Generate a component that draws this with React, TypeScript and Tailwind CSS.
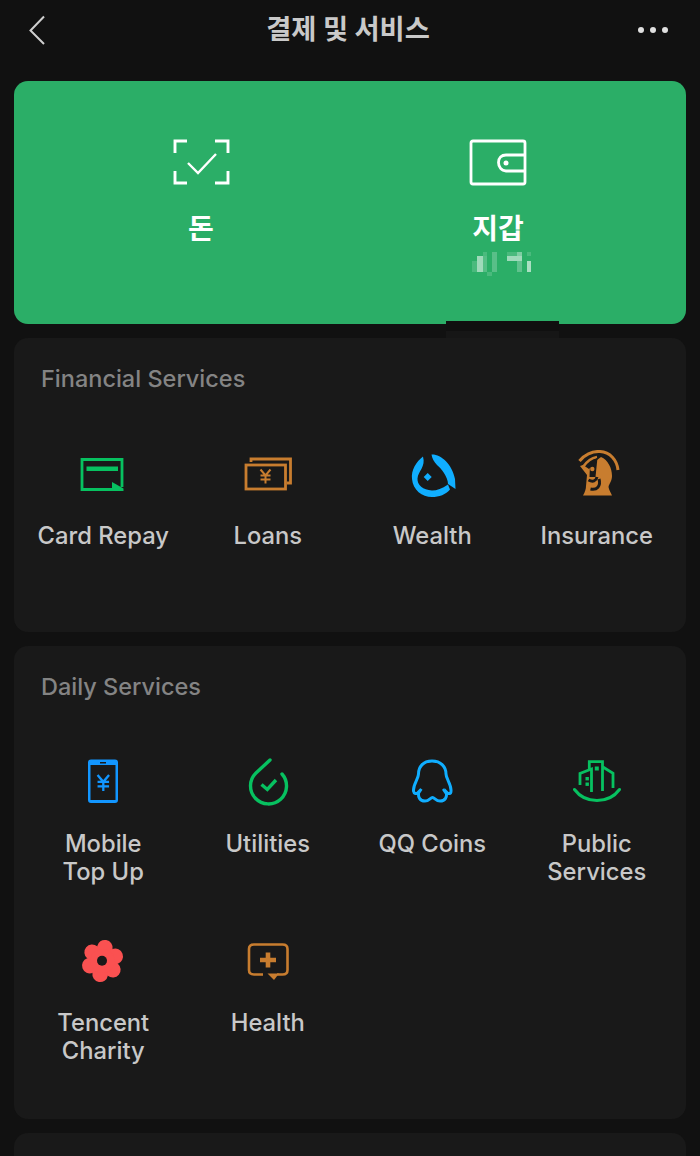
const Y = ({ x, y, s = 1, c }: { x: number; y: number; s?: number; c: string }) => (
  <path
    transform={`translate(${x} ${y}) scale(${s})`}
    d="M-5 -7 L0 -1 L5 -7 M-5 -1 H5 M-5 3 H5 M0 -1 V7"
    fill="none"
    stroke={c}
    strokeWidth={2}
  />
);

const Box = ({ children }: { children: React.ReactNode }) => (
  <svg width="48" height="48" viewBox="0 0 48 48" className="block">
    {children}
  </svg>
);

const G = "#07c160";
const O = "#c87d2f";
const B = "#10aeff";
const D = "#191919";

const CardIcon = () => (
  <Box>
    <path d="M33 39.500H3V9.500H43V37" fill="none" stroke={G} strokeWidth="2.800" />
    <rect x="7.500" y="16.500" width="31.500" height="4.500" fill={G} />
    <path d="M33 32L44.500 38.500V41H33Z" fill={G} />
  </Box>
);
const LoansIcon = () => (
  <Box>
    <path d="M7 12V9H46.500V33H43" fill="none" stroke={O} strokeWidth="2.800" />
    <rect x="2" y="15" width="39.500" height="24" fill="none" stroke={O} strokeWidth="2.800" />
    <Y x={21.500} y={26.500} s={1} c={O} />
  </Box>
);
const WealthIcon = () => (
  <Box>
    <path d="M15 6.500C8 12 3 20 4 29C5 40 14 47 24 47C31 47 38 44.500 42 39.500L40 34.500C34 38.500 29 40.500 24 40.500C15 40 9 35 9.500 28.500C10 21 18 17 15 6.500Z" fill={B} />
    <path d="M23.500 4.500C33 4 44 14 47 29L47.500 39L40 34C40 27 33 18 29 15C26 12 24 8 23.500 4.500Z" fill={B} />
    <path d="M19.700 23L23.700 27L19.700 31L15.700 27Z" fill={B} />
  </Box>
);
const InsuranceIcon = () => (
  <Box>
    <path d="M6.500 11C11 5 19 1 27 1.500C37 2 44 10 45 20" fill="none" stroke={O} strokeWidth="3" />
    <path d="M10 17C14 11 18 8 24 7" fill="none" stroke={O} strokeWidth="2.600" />
    <path d="M28 7C35 10 39 18 39 26C39 31 36 34 35.500 37C36 40 38 43 39 45.500H10C12 42 13 39 13 36L14 25L7 16L10 15L16 19L24 10Z" fill={O} />
    <path d="M17 14L24.500 7.500L22.500 27L16.500 27Z" fill={D} />
    <circle cx="19.300" cy="19" r="2.200" fill={O} />
    <path d="M15.500 30C20 32.500 23 31 24 27M17.500 39C24 40.500 28 36 26 29" fill="none" stroke={D} strokeWidth="3" />
  </Box>
);
const PhoneIcon = () => (
  <Box>
    <path
      fillRule="evenodd"
      d="M12 1.500H36a3 3 0 0 1 3 3V42a3 3 0 0 1-3 3H12a3 3 0 0 1-3-3V4.500a3 3 0 0 1 3-3ZM11.500 7V42H36.500V7Z"
      fill="#1296ff"
    />
    <rect x="21" y="4" width="6" height="1.500" fill={D} />
    <Y x={24.300} y={25} s={1.150} c="#1296ff" />
  </Box>
);
const UtilIcon = () => (
  <Box>
    <path d="M26 2L12 15A18 18 0 1 0 38 16" fill="none" stroke={G} strokeWidth="3.400" strokeLinecap="round" />
    <path d="M17.500 26.500L23.300 31.500L32 22" fill="none" stroke={G} strokeWidth="3.400" />
  </Box>
);
const QQIcon = () => (
  <Box>
    <path
      d="M24 3C15 3 10.500 9 10.500 16C10.500 21 5 26 5.500 33C6 36 8 36.500 10.500 34C10 39 11.500 43 17 43C21 43 22.500 39.500 24.500 39.500C26.500 39.500 28 43 32 43C37.500 43 39 39 38.500 34C41 36.500 43 36 43 33C43.500 26 38 21 38 16C38 9 33 3 24 3Z"
      fill="none"
      stroke={B}
      strokeWidth="3"
    />
    <path d="M9.500 37L13.500 31M39 37L35 31" fill="none" stroke={B} strokeWidth="2.400" />
  </Box>
);
const PublicIcon = () => (
  <Box>
    <path d="M1.500 31.500C7 39 15 42.500 24 42.500C33 42.500 41 39 46.500 31.500" fill="none" stroke={G} strokeWidth="3" strokeLinecap="round" />
    <path d="M7 27V15.500L18.500 11V34M16.300 11V3.700H29.500V33M29.500 8.700L40 15.300V30" fill="none" stroke={G} strokeWidth="2.800" />
    <rect x="21.800" y="8.500" width="4" height="4" fill={G} />
    <rect x="12.500" y="19" width="3.400" height="3.400" fill={G} />
    <rect x="12.500" y="24.500" width="3.400" height="3.400" fill={G} />
  </Box>
);
const FlowerIcon = () => (
  <Box>
    <g fill="#fa5151">
      {[0, 60, 120, 180, 240, 300].map((a) => (
        <circle key={a} cx="23.500" cy="10.500" r="7.800" transform={`rotate(${a + 10} 23.500 24)`} />
      ))}
      <circle cx="23.500" cy="24" r="12" />
    </g>
    <circle cx="23" cy="23.700" r="5" fill={D} />
  </Box>
);
const HealthIcon = () => (
  <Box>
    <path
      d="M19 37.500H10C6.500 37.500 5 36 5 33V12C5 9 6.500 7.500 10 7.500H38.500C42 7.500 43.500 9 43.500 12V33C43.500 36 42 37.500 38.500 37.500H33"
      fill="none"
      stroke={O}
      strokeWidth="2.600"
    />
    <path d="M23.500 36.500H35L30 43Z" fill={O} />
    <path d="M24 15.500V30.500M16 23H32" fill="none" stroke={O} strokeWidth="4.600" />
  </Box>
);

type Item = { icon: React.ReactNode; label: string[] };

const financial: Item[] = [
  { icon: <CardIcon />, label: ["Card Repay"] },
  { icon: <LoansIcon />, label: ["Loans"] },
  { icon: <WealthIcon />, label: ["Wealth"] },
  { icon: <InsuranceIcon />, label: ["Insurance"] },
];
const daily: Item[] = [
  { icon: <PhoneIcon />, label: ["Mobile", "Top Up"] },
  { icon: <UtilIcon />, label: ["Utilities"] },
  { icon: <QQIcon />, label: ["QQ Coins"] },
  { icon: <PublicIcon />, label: ["Public", "Services"] },
  { icon: <FlowerIcon />, label: ["Tencent", "Charity"] },
  { icon: <HealthIcon />, label: ["Health"] },
];

const Panel = ({ title, items }: { title: string; items: Item[] }) => (
  <section className="mx-[14px] rounded-[14px] bg-[#191919] pt-[27px] pb-[54px]">
    <h2 className="pl-[27px] text-[23.5px] leading-[28px] font-medium text-[#848484]">{title}</h2>
    <div className="mx-[7px] mt-[57px] grid grid-cols-4 gap-y-[51px]">
      {items.map((it) => (
        <div key={it.label.join()} className="flex min-h-[128px] flex-col items-center">
          {it.icon}
          <div className="mt-[24px] text-center text-[23.75px] leading-[28px] font-medium whitespace-nowrap text-[#c8c8c8]">
            {it.label.map((l) => (
              <div key={l}>{l}</div>
            ))}
          </div>
        </div>
      ))}
    </div>
  </section>
);

const blur: [number, number, number, number, number][] = [
  [7, 9, 5, 11, 0.15],
  [12, 4, 6, 16, 0.55],
  [18, 4, 4, 16, 0.2],
  [18, 0, 4, 4, 0.15],
  [27, 0, 5, 20, 0.22],
  [22, 20, 5, 4, 0.15],
  [42, 4, 15, 5, 0.55],
  [42, 0, 10, 4, 0.15],
  [52, 0, 5, 4, 0.4],
  [52, 9, 5, 11, 0.25],
  [62, 0, 5, 4, 0.15],
  [62, 9, 5, 11, 0.6],
];

export default function App() {
  return (
    <div
      className="h-[1156px] overflow-hidden bg-[#111111]"
      style={{ fontFamily: 'Inter, "Noto Sans CJK KR", sans-serif' }}
    >
      <header className="grid h-[81px] grid-cols-[1fr_auto_1fr] items-start pt-[15px] pr-[32px] pl-[28px]">
        <svg width="18" height="30" viewBox="0 0 18 30">
          <path d="M16 1.500L2.500 15.500L16 29" fill="none" stroke="#cfcfcf" strokeWidth="2" />
        </svg>
        <h1 className="text-[27.3px] leading-[30px] font-bold text-[#c9c9c9]">결제 및 서비스</h1>
        <div className="mt-[12px] flex justify-end gap-[6px]">
          <span className="h-[6px] w-[6px] rounded-full bg-[#e0e0e0]" />
          <span className="h-[6px] w-[6px] rounded-full bg-[#e0e0e0]" />
          <span className="h-[6px] w-[6px] rounded-full bg-[#e0e0e0]" />
        </div>
      </header>

      <section className="relative mx-[14px] grid h-[243px] grid-cols-2 rounded-[14px] bg-[#2bae67] pt-[57px] text-white">
        <div className="ml-[38px] flex flex-col items-center">
          <svg width="60" height="48" viewBox="0 0 60 48">
            <path d="M4 15V3H16M44 3H57V15M4 33V45H16M44 45H57V33" fill="none" stroke="#fff" strokeWidth="2.900" />
            <path d="M17 25L27 35L45 16" fill="none" stroke="#fff" strokeWidth="2.400" />
          </svg>
          <div className="mt-[25px] text-[28px] leading-[36px] font-bold">돈</div>
        </div>
        <div className="mr-[40px] flex flex-col items-center">
          <svg width="58" height="48" viewBox="0 0 58 48">
            <rect x="2" y="3" width="54" height="43" rx="2" fill="none" stroke="#fff" strokeWidth="2.800" />
            <path d="M56 17H37C32.500 17 29.500 20 29.500 24.500C29.500 29 32.500 33 37 33H56" fill="none" stroke="#fff" strokeWidth="2.800" />
            <circle cx="37" cy="25" r="2.500" fill="#fff" />
          </svg>
          <div className="mt-[25px] text-[28px] leading-[36px] font-bold">지갑</div>
          <svg width="66" height="26" viewBox="0 0 66 26" className="mt-[5px]" shapeRendering="crispEdges">
            {blur.map(([x, y, w, h, o], i) => (
              <rect key={i} x={x} y={y} width={w} height={h} fill="#fff" opacity={o} />
            ))}
          </svg>
        </div>
        <div className="absolute top-[240px] left-[432px] w-[113px]">
          <div className="h-[10px] bg-[#101010]" />
          <div className="h-[7px] bg-[#161616]" />
        </div>
      </section>

      <div className="mt-[14px] flex flex-col gap-[14px]">
        <Panel title="Financial Services" items={financial} />
        <Panel title="Daily Services" items={daily} />
        <section className="mx-[14px] h-[60px] rounded-[14px] bg-[#191919]" />
      </div>
    </div>
  );
}
